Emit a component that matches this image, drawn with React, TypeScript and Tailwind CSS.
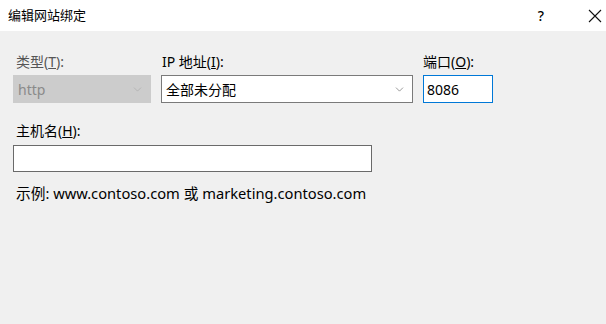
import { ChevronDown } from "lucide-react";

const font = { fontFamily: '"Segoe UI", "Noto Sans", "Noto Sans CJK SC", sans-serif' };

export default function App() {
  return (
    <div className="flex h-[324px] w-[606px] flex-col bg-[#f0f0f0] text-[14px] text-black" style={font}>
      {/* title bar */}
      <div className="flex h-[31px] shrink-0 items-center bg-white pl-2 pr-[1px]">
        <span className="flex-1 text-[13px]">编辑网站绑定</span>
        <span className="w-[20px] shrink-0 text-center text-[14px] font-medium">?</span>
        <div className="ml-[34px] flex h-[20px] w-[20px] shrink-0 items-center justify-center">
          <svg className="block h-[14px] w-[14px]" viewBox="0 0 14 14" fill="none">
            <path d="M1 1L13 13M13 1L1 13" stroke="#111111" strokeWidth="1.1" />
          </svg>
        </div>
      </div>

      <div className="flex flex-col px-[13px] pt-[21px]">
        <div className="flex gap-[10px]">
          <div className="flex flex-col">
            <label className="mb-[3px] pl-[3px] leading-[20px] text-[#555]">
              类型(<u>T</u>):
            </label>
            <div className="flex h-[28px] w-[138px] items-center border border-[#cccccc] bg-[#cccccc] pl-[4px] pr-[6px] text-[#8a8a8a]">
              <span className="flex-1">http</span>
              <ChevronDown size={13} strokeWidth={1} className="text-[#a0a0a0]" />
            </div>
          </div>
          <div className="flex flex-col">
            <label className="mb-[3px] pl-[1px] leading-[20px]">
              IP 地址(<u>I</u>):
            </label>
            <div className="flex h-[28px] w-[252px] items-center border border-[#7a7a7a] bg-white pl-[4px] pr-[6px]">
              <span className="flex-1">全部未分配</span>
              <ChevronDown size={13} strokeWidth={1} className="text-[#444]" />
            </div>
          </div>
          <div className="flex flex-col">
            <label className="mb-[3px] leading-[20px]">
              端口(<u>O</u>):
            </label>
            <div className="flex h-[28px] w-[70px] items-center border border-[#0078d7] bg-white pl-[3px]">
              8086
            </div>
          </div>
        </div>

        <label className="mt-[18px] mb-[4px] pl-[3px] leading-[20px]">
          主机名(<u>H</u>):
        </label>
        <div className="h-[27px] w-[359px] border border-[#6a6a6a] bg-white" />

        <p className="mt-[11px] pl-[3px] text-[14.7px] leading-[20px]">
          示例: www.contoso.com 或 marketing.contoso.com
        </p>
      </div>
    </div>
  );
}
